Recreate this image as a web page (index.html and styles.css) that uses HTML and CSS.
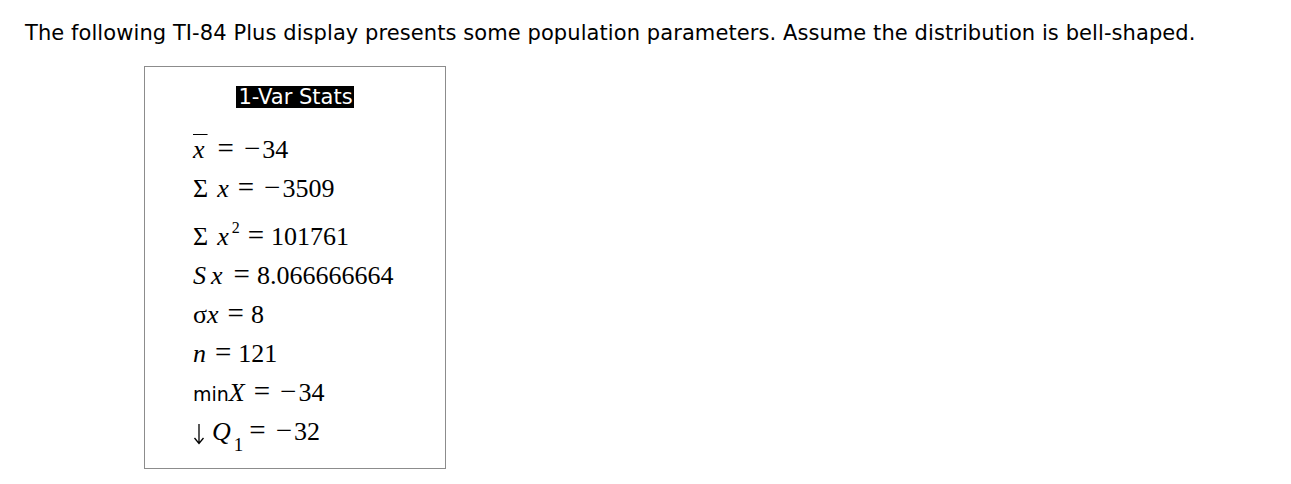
FILE: index.html
```html
<!DOCTYPE html>
<html>
<head>
<meta charset="utf-8">
<link rel="stylesheet" href="styles.css">
</head>
<body>
<p class="intro">The following TI-84 Plus display presents some population parameters. Assume the distribution is bell-shaped.</p>
<div class="screen">
  <div class="title"><span class="title-text">1-Var Stats</span></div>
  <div class="rows">
    <div class="row"><span class="i bar">x</span><span class="op">=</span><span class="neg">−</span>34</div>
    <div class="row"><span class="sym">Σ</span><span class="i">x</span><span class="op">=</span><span class="neg">−</span>3509</div>
    <div class="row tall"><span class="sym">Σ</span><span class="i">x</span><sup class="sq">2</sup><span class="op">=</span>101761</div>
    <div class="row"><span class="i wide">Sx</span><span class="op">=</span>8.066666664</div>
    <div class="row"><span>σ</span><span class="i">x</span><span class="op">=</span>8</div>
    <div class="row"><span class="i">n</span><span class="op">=</span>121</div>
    <div class="row"><span class="sans">min</span><span class="i">X</span><span class="op">=</span><span class="neg">−</span>34</div>
    <div class="row"><svg class="arrow" width="12" height="22" viewBox="0 0 12 22"><path d="M6 1V20M1.5 15L6 20.5L10.5 15" fill="none" stroke="#000" stroke-width="1.3"/></svg><span class="i">Q</span><sub class="sub">1</sub><span class="op">=</span><span class="neg">−</span>32</div>
  </div>
</div>
</body>
</html>
```
FILE: styles.css
```css
body {
  margin: 0;
  padding: 20px 25px;
  background: #fff;
  color: #000;
  font-family: "DejaVu Sans", Verdana, sans-serif;
}
.intro {
  margin: 0;
  font-size: 21px;
  line-height: 26px;
  letter-spacing: 0.08px;
}
.screen {
  margin: 20px 0 0 119px;
  width: 300px;
  height: 401px;
  border: 1px solid #8c8c8c;
}
.title {
  text-align: center;
  margin-top: 19px;
  font-size: 21px;
  line-height: 22px;
}
.title-text {
  display: inline-block;
  background: #000;
  color: #fff;
  padding: 0 1px 0 2px;
  line-height: 22px;
}
.rows {
  margin: 26px 0 0 48px;
  font-family: "Liberation Serif", "Times New Roman", serif;
  font-size: 26px;
}
.row {
  height: 39px;
  line-height: 31px;
  white-space: nowrap;
}
.row.tall {
  height: 48px;
  padding-top: 9px;
  box-sizing: border-box;
}
.i { font-style: italic; letter-spacing: 3px; }
.wide { letter-spacing: 5px; }
.bar {
  display: inline-block;
  padding-right: 4px;
  line-height: 31px;
  text-decoration: overline;
  text-decoration-thickness: 1px;
}
.op { font-size: 29px; margin: 0 7px 0 6px; line-height: 0; }
.neg { font-size: 29px; margin: 0 2px 0 3px; line-height: 0; }
.sym { margin-right: 9px; }
.sq { font-size: 16px; vertical-align: 12px; line-height: 0; margin-right: 2px; }
.sub { font-size: 19px; vertical-align: -11px; line-height: 0; margin-right: 0; }
.sans { font-family: "DejaVu Sans", Verdana, sans-serif; font-size: 19px; }
.arrow { vertical-align: -5px; margin-right: 7px; }
```
